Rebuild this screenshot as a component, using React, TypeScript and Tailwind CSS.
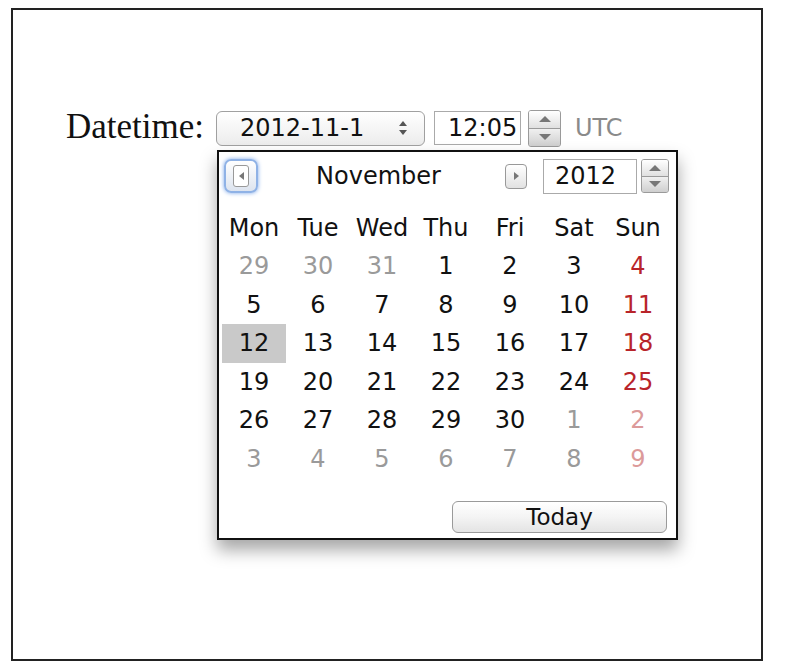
import React from "react";

const CAL = '"DejaVu Sans", "Liberation Sans", sans-serif';

type Day = { d: number; out?: boolean };

const weeks: Day[][] = [
  [{ d: 29, out: true }, { d: 30, out: true }, { d: 31, out: true }, { d: 1 }, { d: 2 }, { d: 3 }, { d: 4 }],
  [{ d: 5 }, { d: 6 }, { d: 7 }, { d: 8 }, { d: 9 }, { d: 10 }, { d: 11 }],
  [{ d: 12 }, { d: 13 }, { d: 14 }, { d: 15 }, { d: 16 }, { d: 17 }, { d: 18 }],
  [{ d: 19 }, { d: 20 }, { d: 21 }, { d: 22 }, { d: 23 }, { d: 24 }, { d: 25 }],
  [{ d: 26 }, { d: 27 }, { d: 28 }, { d: 29 }, { d: 30 }, { d: 1, out: true }, { d: 2, out: true }],
  [{ d: 3, out: true }, { d: 4, out: true }, { d: 5, out: true }, { d: 6, out: true }, { d: 7, out: true }, { d: 8, out: true }, { d: 9, out: true }],
];

const heads = ["Mon", "Tue", "Wed", "Thu", "Fri", "Sat", "Sun"];

function Spinner({ big }: { big?: boolean }) {
  return (
    <div
      className={`flex flex-col ${big ? "w-[33px] h-[37px]" : "w-[28px] h-[34px]"} border border-[#9a9a9a] rounded-[3px] overflow-hidden bg-gradient-to-b from-[#fafafa] to-[#d4d4d4]`}
    >
      <div className="flex-1 flex items-center justify-center border-b border-[#9a9a9a] bg-gradient-to-b from-white to-[#e0e0e0]">
        <svg width="14" height="8" viewBox="0 0 14 8">
          <path d="M1 7 L7 1 L13 7 Z" fill="#777" />
        </svg>
      </div>
      <div className="flex-1 flex items-center justify-center bg-gradient-to-b from-[#f0f0f0] to-[#cfcfcf]">
        <svg width="14" height="8" viewBox="0 0 14 8">
          <path d="M1 1 L7 7 L13 1 Z" fill="#777" />
        </svg>
      </div>
    </div>
  );
}

function Calendar() {
  return (
    <div
      className="absolute left-[151px] top-[40px] w-[461px] h-[390px] bg-white border-2 border-[#111] shadow-[0_10px_16px_rgba(0,0,0,0.35)] flex flex-col"
      style={{ fontFamily: CAL }}
    >
      <div className="flex items-center h-[40px] pl-[5px] pr-[7px] mt-[4px]">
        <button className="w-[34px] h-[34px] rounded-[7px] border-2 border-[#8fb2e6] shadow-[0_0_4px_#7aa6ea] flex items-center justify-center bg-gradient-to-b from-white to-[#dde4ef]">
          <span className="w-[16px] h-[22px] border border-[#999] rounded-[3px] flex items-center justify-center bg-white">
            <svg width="7" height="10" viewBox="0 0 7 10">
              <path d="M6 1 L1 5 L6 9 Z" fill="#777" />
            </svg>
          </span>
        </button>
        <div className="flex-1 text-center text-[24px] text-[#111] pr-[6px]">November</div>
        <span className="w-[22px] h-[25px] border border-[#999] rounded-[4px] flex items-center justify-center bg-gradient-to-b from-white to-[#e2e2e2] mr-[16px]">
          <svg width="7" height="10" viewBox="0 0 7 10">
            <path d="M1 1 L6 5 L1 9 Z" fill="#777" />
          </svg>
        </span>
        <div className="w-[94px] h-[35px] border border-[#aaa] flex items-center pl-[11px] text-[24px] text-[#111]">2012</div>
        <div className="ml-[4px]">
          <Spinner />
        </div>
      </div>
      <div className="grid grid-cols-[repeat(7,64px)] px-[3px] mt-[13px]">
        {heads.map((h) => (
          <div key={h} className="h-[38px] flex items-center justify-center text-[24px] text-[#111]">
            {h}
          </div>
        ))}
        {weeks.map((w, wi) =>
          w.map((day, di) => {
            const weekend = di === 6;
            const color = day.out
              ? weekend
                ? "text-[#dc9a9a]"
                : "text-[#9a9a9a]"
              : weekend
                ? "text-[#b8242a]"
                : "text-[#111]";
            const sel = wi === 2 && di === 0;
            return (
              <div
                key={`${wi}-${di}`}
                className={`h-[38.5px] flex items-center justify-center text-[24px] ${color} ${sel ? "bg-[#c9c9c9]" : ""}`}
              >
                {day.d}
              </div>
            );
          })
        )}
      </div>
      <div className="flex-1" />
      <div className="flex justify-end pr-[9px] pb-[5px]">
        <button className="w-[215px] h-[32px] rounded-[6px] border border-[#9a9a9a] bg-gradient-to-b from-white via-[#f4f4f4] to-[#e4e4e4] text-[23px] text-[#111] leading-none">
          Today
        </button>
      </div>
    </div>
  );
}

export default function App() {
  return (
    <div className="bg-white w-[786px] h-[661px] overflow-hidden">
      <div className="ml-[11px] mt-[8px] w-[752px] h-[653px] border-2 border-[#222] pt-[100px] pl-[53px]">
        <div className="relative flex items-center h-[36px]">
          <span
            className="w-[139px] mr-[11px] whitespace-nowrap text-[35px] leading-none text-[#111] -mt-[4px]"
            style={{ fontFamily: '"Liberation Serif", serif' }}
          >
            Datetime:
          </span>
          <div
            className="flex items-center w-[209px] h-[35px] rounded-[6px] border border-[#a0a0a0] bg-gradient-to-b from-white to-[#ececec] pl-[23px] text-[24px] text-[#111]"
            style={{ fontFamily: CAL }}
          >
            <span className="flex-1">2012-11-1</span>
            <svg width="10" height="16" viewBox="0 0 10 16" className="mr-[16px]">
              <path d="M1 6 L5 1 L9 6 Z" fill="#555" />
              <path d="M1 10 L5 15 L9 10 Z" fill="#555" />
            </svg>
          </div>
          <div
            className="ml-[9px] w-[87px] h-[34px] border border-[#aaa] flex items-center pl-[13px] text-[24px] text-[#111]"
            style={{ fontFamily: CAL }}
          >
            12:05
          </div>
          <div className="ml-[7px]">
            <Spinner big />
          </div>
          <span className="ml-[14px] text-[24px] text-[#8a8a8a]" style={{ fontFamily: CAL }}>
            UTC
          </span>
          <Calendar />
        </div>
      </div>
    </div>
  );
}
